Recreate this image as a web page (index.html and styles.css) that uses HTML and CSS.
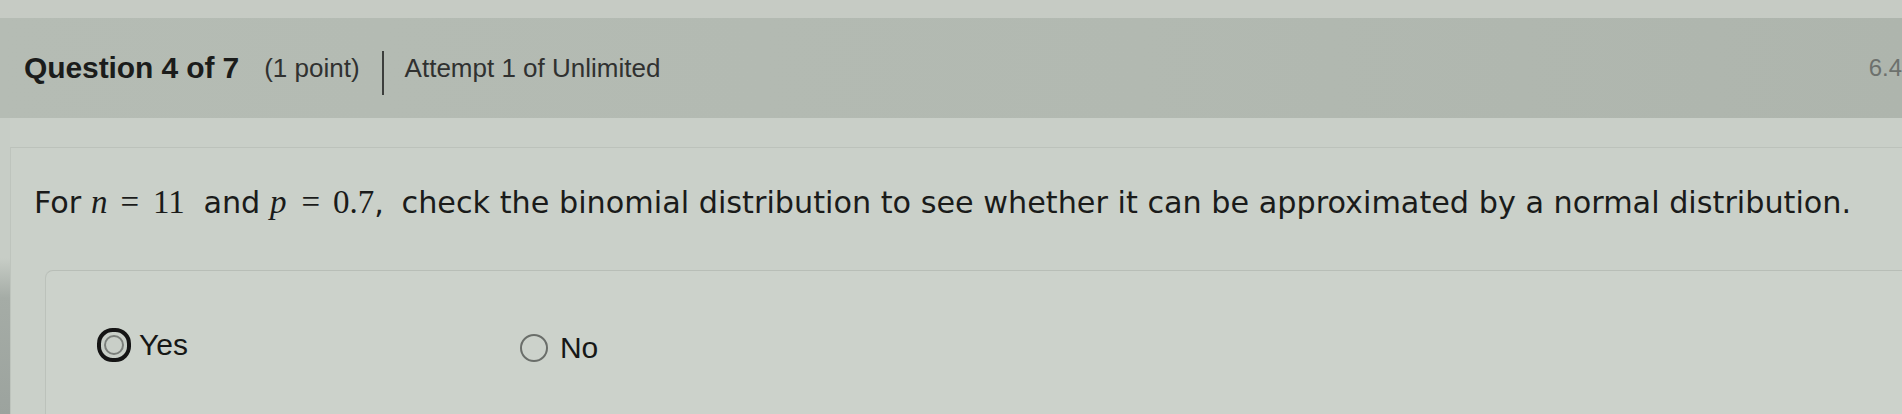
FILE: index.html
```html
<!DOCTYPE html>
<html lang="en">
<head>
<meta charset="utf-8">
<title>Question 4 of 7</title>
<link rel="stylesheet" href="styles.css">
</head>
<body>
<div class="page">
  <div class="topbar"></div>
  <header class="qheader">
    <span class="qtitle">Question 4 of 7</span>
    <span class="qpoints">(1 point)</span>
    <span class="qdivider"></span>
    <span class="qattempt">Attempt 1 of Unlimited</span>
    <span class="qsection">6.4</span>
  </header>
  <main class="main">
    <div class="edge"></div>
    <section class="panel">
      <p class="question">For <span class="math math-n"><i class="mv">n</i><span class="eq">=</span>11</span> and <span class="math math-p"><i class="mv">p</i><span class="eq">=</span>0.7</span><span class="comma">,</span> check the binomial distribution to see whether it can be approximated by a normal distribution.</p>
      <div class="answers">
        <label class="option option-yes">
          <span class="radio selected"><span class="radio-inner"></span></span>
          <span class="opt-text">Yes</span>
        </label>
        <label class="option option-no">
          <span class="radio"><span class="radio-inner"></span></span>
          <span class="opt-text">No</span>
        </label>
      </div>
    </section>
  </main>
</div>
</body>
</html>
```

FILE: styles.css
```css
html, body {
  margin: 0;
  padding: 0;
}
body {
  width: 1902px;
  height: 414px;
  overflow: hidden;
  background: #c8cdc6;
  font-family: "Liberation Sans", Arial, sans-serif;
}
.page {
  display: flex;
  flex-direction: column;
  height: 414px;
}
.topbar {
  height: 18px;
  background: #c6cbc4;
}
.qheader {
  height: 100px;
  background: linear-gradient(to right, #b5bcb4, #b2b9b1 60%, #aeb5ad);
  display: flex;
  align-items: center;
  padding-left: 24px;
  overflow: hidden;
  color: #2a2b2a;
}
.qtitle {
  font-weight: bold;
  font-size: 30px;
  color: #1b1c1b;
  letter-spacing: -0.1px;
}
.qpoints {
  font-size: 26px;
  margin-left: 25px;
  color: #303130;
}
.qdivider {
  width: 2px;
  height: 44px;
  background: #3c3e3c;
  margin-left: 22px;
  margin-top: 10px;
}
.qattempt {
  font-size: 26px;
  margin-left: 21px;
  color: #303130;
}
.qsection {
  margin-left: auto;
  margin-right: 0;
  font-size: 24px;
  color: #6d716d;
}
.main {
  flex: 1;
  display: flex;
  background: #c9cfc8;
}
.edge {
  width: 10px;
  background: linear-gradient(to bottom, #c7cdc6 0, #c7cdc6 140px, #a5aca6 180px, #9ca39e 296px);
}
.panel {
  flex: 1;
  margin-top: 29px;
  border-top: 1px solid #bcc2bb;
  border-left: 1px solid #bec4bd;
  background: #cad0c9;
  display: flex;
  flex-direction: column;
}
.question {
  margin: 0;
  padding: 36px 0 0 23px;
  height: 82px;
  box-sizing: border-box;
  font-family: "DejaVu Sans", Verdana, sans-serif;
  font-size: 30.25px;
  color: #1a1b1a;
  white-space: nowrap;
}
.math {
  font-family: "Liberation Serif", "Times New Roman", serif;
  font-size: 33px;
}
.math i {
  font-style: italic;
}
.math-n {
  margin-right: 9px;
}
.math-n .mv {
  margin-right: 13px;
}
.math-n .eq {
  margin-right: 14px;
}
.math-p .mv {
  margin-right: 15px;
}
.math-p .eq {
  margin-right: 13px;
}
.comma {
  margin-right: 8px;
}
.answers {
  flex: 1;
  margin-left: 34px;
  margin-top: 40px;
  border-top: 1px solid #b8beb7;
  border-left: 1px solid #bcc2bb;
  border-top-left-radius: 8px;
  background: #ccd2cb;
  display: flex;
  align-items: flex-start;
  padding-top: 57px;
  padding-left: 51px;
}
.option {
  display: flex;
  align-items: center;
  font-size: 30px;
  color: #161716;
}
.option-no {
  margin-left: 332px;
  margin-top: 3px;
}
.radio {
  width: 28px;
  height: 28px;
  border-radius: 50%;
  border: 2px solid #6a6e6a;
  box-sizing: border-box;
  display: flex;
  align-items: center;
  justify-content: center;
}
.radio.selected {
  width: 34px;
  height: 34px;
  border: 4px solid #151515;
  border-radius: 46%;
  background: #c9cfc8;
}
.radio.selected .radio-inner {
  width: 20px;
  height: 20px;
  border-radius: 50%;
  border: 2px solid #7b7f7b;
  box-sizing: border-box;
}
.option-yes .opt-text {
  margin-left: 8px;
}
.option-no .opt-text {
  margin-left: 12px;
}
```
